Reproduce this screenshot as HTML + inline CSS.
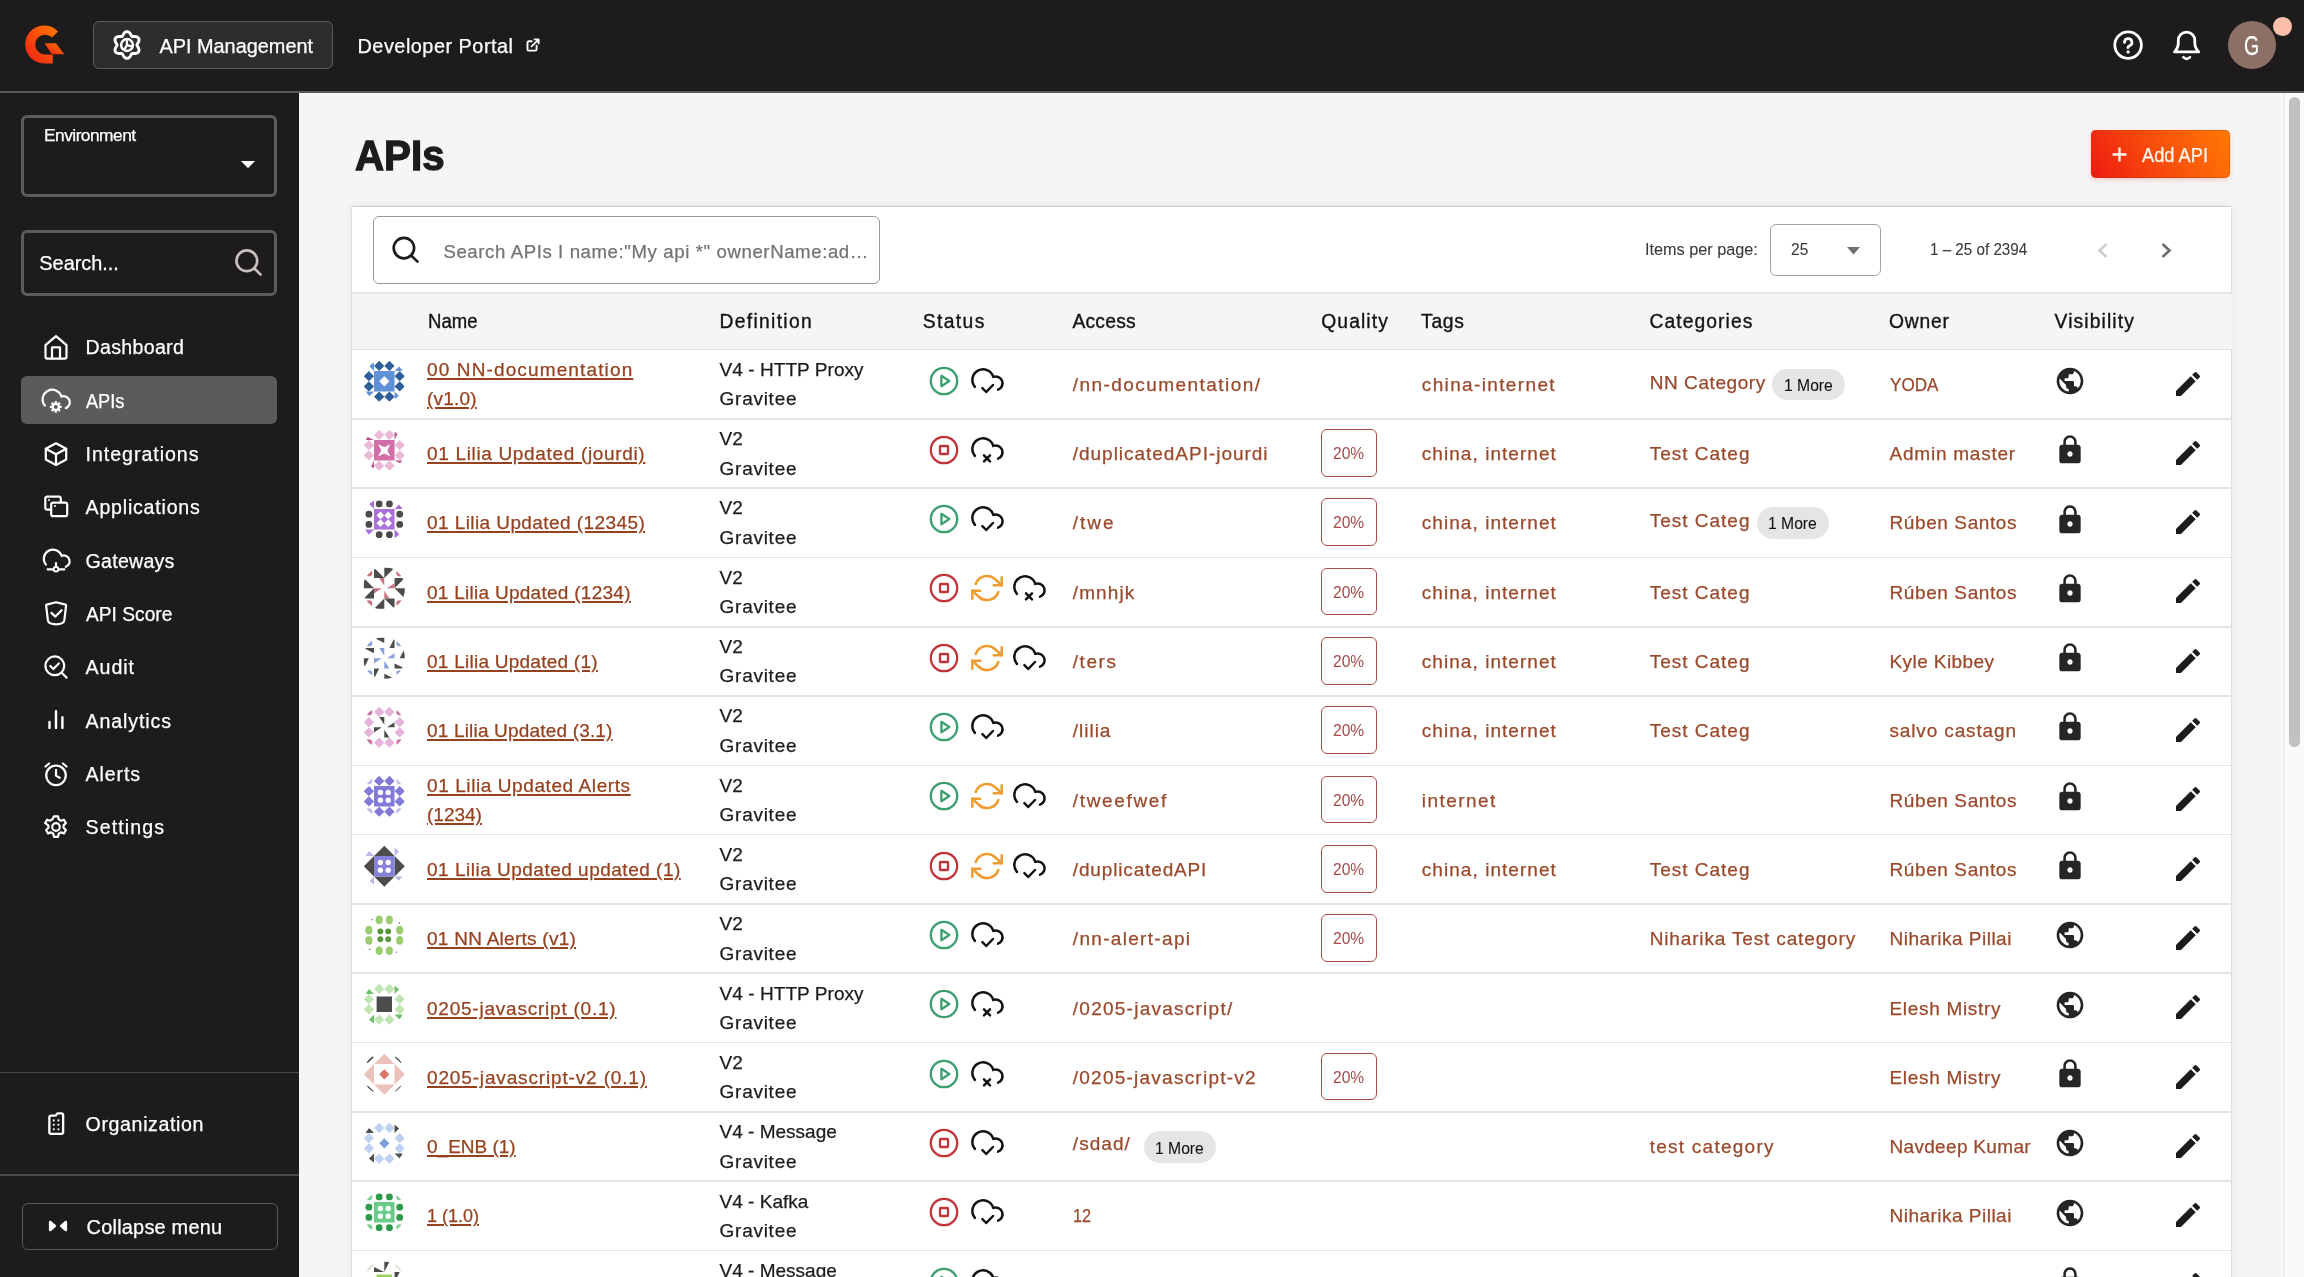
<!DOCTYPE html>
<html><head><meta charset="utf-8"><title>APIs</title>
<style>
html,body{margin:0;padding:0;}
body{width:2304px;height:1277px;overflow:hidden;position:relative;background:#f5f5f7;font-family:"Liberation Sans", sans-serif;}
.a{position:absolute;box-sizing:border-box;}
svg.a{overflow:visible;}
.t{position:absolute;line-height:0;white-space:pre;font-family:"Liberation Sans", sans-serif;-webkit-text-stroke:0.25px currentColor;}
.u{text-decoration:underline;text-decoration-thickness:1.6px;text-underline-offset:2.2px;}
</style></head><body><div class="a" style="left:0;top:0;width:2304px;height:1277px;overflow:hidden;will-change:transform">
<div class="a" style="left:0.00px;top:0.00px;width:2304.00px;height:91.00px;background:#1d1b1c;"></div>
<div class="a" style="left:0.00px;top:91.00px;width:2304.00px;height:2.00px;background:#5b595a;"></div>
<div class="a" style="left:0.00px;top:93.00px;width:298.50px;height:1184.00px;background:#1d1b1c;"></div>
<div class="a" style="left:2284.00px;top:93.00px;width:20.00px;height:1184.00px;background:#fafafa;border-left:1px solid #e9e9e9;"></div>
<div class="a" style="left:2289.00px;top:97.00px;width:11.00px;height:650.00px;background:#c1c1c1;border-radius:6px;"></div>
<svg class="a" style="left:0.00px;top:0.00px;" width="80" height="80" viewBox="0 0 80 80"><defs><linearGradient id="lg" x1="1" y1="0" x2="0" y2="1"><stop offset="0" stop-color="#ff7a00"/><stop offset="1" stop-color="#f01e14"/></linearGradient></defs><path fill="url(#lg)" d="M58 31.4 A19 19 0 1 0 45.1 63.4 L52.8 63.4 L52.8 54.7 L45.1 54.5 A9.9 9.9 0 1 1 52.1 37.6 Z"/><path fill="url(#lg)" d="M44.6 43.2 L55.9 43.2 L64.3 54.2 L51.7 54.2 Z"/></svg>
<div class="a" style="left:93.30px;top:21.30px;width:239.70px;height:47.50px;background:#2e2c2d;border:1.6px solid #5a5859;border-radius:6px;"></div>
<svg class="a" style="left:110.80px;top:29.30px;" width="32" height="32" viewBox="0 0 32 32"><g fill="none" stroke="#fff" stroke-width="2.9" stroke-linejoin="round" stroke-linecap="round"><path d="M16.00 2.60L16.47 2.64L16.93 2.75L17.37 2.94L17.80 3.20L18.20 3.51L18.58 3.88L18.92 4.28L19.24 4.71L19.52 5.16L19.78 5.61L20.02 6.05L20.24 6.47L20.46 6.85L20.69 7.18L20.95 7.43L21.30 7.52L21.69 7.56L22.13 7.56L22.61 7.54L23.11 7.53L23.63 7.53L24.16 7.55L24.69 7.61L25.21 7.71L25.71 7.85L26.19 8.04L26.62 8.28L27.01 8.57L27.34 8.92L27.60 9.30L27.80 9.72L27.93 10.18L27.99 10.66L27.99 11.16L27.92 11.66L27.79 12.17L27.61 12.67L27.39 13.16L27.15 13.63L26.89 14.08L26.63 14.51L26.38 14.91L26.16 15.29L25.99 15.65L25.90 16.00L25.99 16.35L26.16 16.71L26.38 17.09L26.63 17.49L26.89 17.92L27.15 18.37L27.39 18.84L27.61 19.33L27.79 19.83L27.92 20.34L27.99 20.84L27.99 21.34L27.93 21.82L27.80 22.28L27.60 22.70L27.34 23.08L27.01 23.43L26.62 23.72L26.19 23.96L25.71 24.15L25.21 24.29L24.69 24.39L24.16 24.45L23.63 24.47L23.11 24.47L22.61 24.46L22.13 24.44L21.69 24.44L21.30 24.48L20.95 24.57L20.69 24.82L20.46 25.15L20.24 25.53L20.02 25.95L19.78 26.39L19.52 26.84L19.24 27.29L18.92 27.72L18.58 28.12L18.20 28.49L17.80 28.80L17.37 29.06L16.93 29.25L16.47 29.36L16.00 29.40L15.53 29.36L15.07 29.25L14.63 29.06L14.20 28.80L13.80 28.49L13.42 28.12L13.08 27.72L12.76 27.29L12.48 26.84L12.22 26.39L11.98 25.95L11.76 25.53L11.54 25.15L11.31 24.82L11.05 24.57L10.70 24.48L10.31 24.44L9.87 24.44L9.39 24.46L8.89 24.47L8.37 24.47L7.84 24.45L7.31 24.39L6.79 24.29L6.29 24.15L5.81 23.96L5.38 23.72L4.99 23.43L4.66 23.08L4.40 22.70L4.20 22.28L4.07 21.82L4.01 21.34L4.01 20.84L4.08 20.34L4.21 19.83L4.39 19.33L4.61 18.84L4.85 18.37L5.11 17.92L5.37 17.49L5.62 17.09L5.84 16.71L6.01 16.35L6.10 16.00L6.01 15.65L5.84 15.29L5.62 14.91L5.37 14.51L5.11 14.08L4.85 13.63L4.61 13.16L4.39 12.67L4.21 12.17L4.08 11.66L4.01 11.16L4.01 10.66L4.07 10.18L4.20 9.72L4.40 9.30L4.66 8.92L4.99 8.57L5.38 8.28L5.81 8.04L6.29 7.85L6.79 7.71L7.31 7.61L7.84 7.55L8.37 7.53L8.89 7.53L9.39 7.54L9.87 7.56L10.31 7.56L10.70 7.52L11.05 7.43L11.31 7.18L11.54 6.85L11.76 6.47L11.98 6.05L12.22 5.61L12.48 5.16L12.76 4.71L13.08 4.28L13.42 3.88L13.80 3.51L14.20 3.20L14.63 2.94L15.07 2.75L15.53 2.64Z"/><circle cx="16" cy="16" r="5.9" stroke-width="2.5"/><path stroke-width="2.3" d="M15.9 16.2V10.6M15.9 16.2 20.6 17.3M15.9 16.2 13.5 20.4"/></g></svg>
<div class="t" style="left:159.40px;top:46.00px;font-size:19.9px;color:#fff;">API Management</div>
<div class="t" style="left:357.50px;top:46.00px;font-size:19.9px;color:#fff;letter-spacing:0.49px;">Developer Portal</div>
<svg class="a" style="left:525.00px;top:38.30px;" width="15" height="15" viewBox="0 0 15 15"><g fill="none" stroke="#fff" stroke-width="1.9" stroke-linecap="round" stroke-linejoin="round"><path d="M6.7 3.3H3.8A1.3 1.3 0 0 0 2.5 4.6V11.3A1.3 1.3 0 0 0 3.8 12.6H10.3A1.3 1.3 0 0 0 11.6 11.3V7.6"/><path d="M9.6 1.4H13.6V5.4M13.4 1.6 6.6 8.4"/></g></svg>
<svg class="a" style="left:2112.00px;top:29.00px;" width="32" height="32" viewBox="0 0 32 32"><circle cx="16.1" cy="16.1" r="13.3" fill="none" stroke="#fff" stroke-width="2.8"/><path d="M12.5 13.4A3.7 3.7 0 1 1 17.6 16.8Q15.9 17.6 15.9 18.7" fill="none" stroke="#fff" stroke-width="2.7" stroke-linecap="round"/><circle cx="16.1" cy="22.9" r="1.7" fill="#fff"/></svg>
<svg class="a" style="left:2172.00px;top:28.00px;" width="30" height="34" viewBox="0 0 30 34"><path d="M2.5 23.9H26.7C24.3 21.4 22.8 18.8 22.8 15V12.3A8.25 8.25 0 0 0 6.3 12.3V15C6.3 18.8 4.9 21.4 2.5 23.9Z" fill="none" stroke="#fff" stroke-width="2.8" stroke-linejoin="round"/><path d="M11.3 29.2Q14.6 32.6 18 29.2" fill="none" stroke="#fff" stroke-width="2.6" stroke-linecap="round"/></svg>
<div class="a" style="left:2228.10px;top:21.00px;width:48.00px;height:48.00px;background:#8c6f65;border-radius:50%;"></div>
<div class="t" style="left:2244.20px;top:45.77px;font-size:27.5px;color:#fff;transform:scaleX(0.7106);transform-origin:0 0;">G</div>
<div class="a" style="left:2273.20px;top:16.90px;width:18.80px;height:18.80px;background:#fcbfa9;border-radius:50%;"></div>
<div class="a" style="left:21.30px;top:114.70px;width:256.00px;height:82.40px;border:3.4px solid #5d5b5c;border-radius:6px;"></div>
<div class="t" style="left:44.00px;top:134.97px;font-size:17.4px;color:#fff;letter-spacing:-0.55px;">Environment</div>
<svg class="a" style="left:241.00px;top:160.50px;" width="14" height="8" viewBox="0 0 14 8"><path d="M0 0H14L7 7.2Z" fill="#fff"/></svg>
<div class="a" style="left:21.30px;top:229.50px;width:256.00px;height:66.00px;border:3.4px solid #5d5b5c;border-radius:6px;"></div>
<div class="t" style="left:39.30px;top:262.90px;font-size:19.9px;color:#fff;">Search...</div>
<svg class="a" style="left:230.00px;top:244.00px;" width="34" height="34" viewBox="0 0 34 34"><circle cx="16.8" cy="16.8" r="10.4" fill="none" stroke="#c7bfbc" stroke-width="2.7"/><path d="M24.2 24.2 30.6 30.6" stroke="#c7bfbc" stroke-width="2.7" stroke-linecap="round"/></svg>
<div class="a" style="left:21.30px;top:376.00px;width:256.00px;height:47.80px;background:#5c5a5b;border-radius:6px;"></div>
<svg class="a" style="left:44.00px;top:335.00px;" width="24" height="24" viewBox="0 0 24 24"><path fill="none" stroke="#fff" stroke-width="2.2" stroke-linecap="round" stroke-linejoin="round" d="M1.5 10.2 12 1.2l10.5 9V21.8a1.8 1.8 0 0 1-1.8 1.8H3.3a1.8 1.8 0 0 1-1.8-1.8Z"/><path fill="none" stroke="#fff" stroke-width="2.2" stroke-linecap="round" stroke-linejoin="round" d="M8 23.4V12.3h8v11.1"/></svg>
<div class="t" style="left:85.60px;top:347.31px;font-size:19.6px;color:#fff;letter-spacing:0.293px;">Dashboard</div>
<svg class="a" style="left:44.00px;top:388.33px;" width="24" height="24" viewBox="0 0 24 24"><g transform="translate(-0.2 0.9)"><path fill="none" stroke="#fff" stroke-width="2.2" stroke-linecap="round" stroke-linejoin="round" d="M1.1 16.7A9.63 9.63 0 1 1 17.67 7.68A6.12 6.12 0 0 1 22 19.2"/><g transform="translate(12 18)"><circle r="3.2" fill="none" stroke="#fff" stroke-width="2.5"/><path d="M0.00 -4.00L0.00 -5.90M2.83 -2.83L4.17 -4.17M4.00 -0.00L5.90 -0.00M2.83 2.83L4.17 4.17M0.00 4.00L0.00 5.90M-2.83 2.83L-4.17 4.17M-4.00 0.00L-5.90 0.00M-2.83 -2.83L-4.17 -4.17" stroke="#fff" stroke-width="2.2"/></g></g></svg>
<div class="t" style="left:85.60px;top:400.64px;font-size:19.6px;color:#fff;transform:scaleX(0.9277);transform-origin:0 0;">APIs</div>
<svg class="a" style="left:44.00px;top:441.66px;" width="24" height="24" viewBox="0 0 24 24"><path fill="none" stroke="#fff" stroke-width="2.2" stroke-linecap="round" stroke-linejoin="round" d="M12 1.3 22.2 6.8V17.5L12 23 1.8 17.5V6.8Z"/><path fill="none" stroke="#fff" stroke-width="2.2" stroke-linecap="round" stroke-linejoin="round" d="M1.8 6.8 12 12.3 22.2 6.8M12 12.3V23"/></svg>
<div class="t" style="left:85.60px;top:453.97px;font-size:19.6px;color:#fff;letter-spacing:0.955px;">Integrations</div>
<svg class="a" style="left:44.00px;top:494.99px;" width="24" height="24" viewBox="0 0 24 24"><rect fill="none" stroke="#fff" stroke-width="2.2" stroke-linecap="round" stroke-linejoin="round" x="1.3" y="1.6" width="15.5" height="13" rx="2"/><rect x="7.2" y="7.6" width="16" height="13.6" rx="2" fill="#1d1b1c" stroke="#fff" stroke-width="2.2"/><circle cx="5" cy="5" r="1" fill="#fff"/><circle cx="11" cy="11" r="1" fill="#fff"/></svg>
<div class="t" style="left:85.60px;top:507.30px;font-size:19.6px;color:#fff;letter-spacing:0.777px;">Applications</div>
<svg class="a" style="left:44.00px;top:548.32px;" width="24" height="24" viewBox="0 0 24 24"><path fill="none" stroke="#fff" stroke-width="2.2" stroke-linecap="round" stroke-linejoin="round" d="M1.9 16.6A9.18 9.18 0 1 1 17.7 7.85A5.83 5.83 0 0 1 21.8 18.8"/><path fill="none" stroke="#fff" stroke-width="2.2" stroke-linecap="round" stroke-linejoin="round" d="M3.6 21.3H20.4M12 15.2V19"/><circle cx="12" cy="21.3" r="2.3" fill="#1d1b1c" stroke="#fff" stroke-width="2"/></svg>
<div class="t" style="left:85.60px;top:560.63px;font-size:19.6px;color:#fff;letter-spacing:0.239px;">Gateways</div>
<svg class="a" style="left:44.00px;top:601.65px;" width="24" height="24" viewBox="0 0 24 24"><path fill="none" stroke="#fff" stroke-width="2.2" stroke-linecap="round" stroke-linejoin="round" d="M12.1 0.3 2.7 2.6Q2 2.8 2.1 3.6L3.9 18.4Q4.5 22.3 12.1 22.3 19.7 22.3 20.3 18.4L22.1 3.6Q22.2 2.8 21.5 2.6Z"/><path fill="none" stroke="#fff" stroke-width="2.2" stroke-linecap="round" stroke-linejoin="round" d="M7.4 10.9 11.4 14.6 17.6 8.2"/></svg>
<div class="t" style="left:85.60px;top:613.96px;font-size:19.6px;color:#fff;transform:scaleX(0.9794);transform-origin:0 0;">API Score</div>
<svg class="a" style="left:44.00px;top:654.98px;" width="24" height="24" viewBox="0 0 24 24"><circle fill="none" stroke="#fff" stroke-width="2.2" stroke-linecap="round" stroke-linejoin="round" cx="10.8" cy="10.8" r="9.4"/><path fill="none" stroke="#fff" stroke-width="2.2" stroke-linecap="round" stroke-linejoin="round" d="M6.3 11l3 3 5.5-5.6M18 18l4.6 4.6"/></svg>
<div class="t" style="left:85.60px;top:667.29px;font-size:19.6px;color:#fff;letter-spacing:0.932px;">Audit</div>
<svg class="a" style="left:44.00px;top:708.31px;" width="24" height="24" viewBox="0 0 24 24"><path fill="none" stroke="#fff" stroke-width="2.4" stroke-linecap="round" d="M5.5 19.9V13.9M12 19.9V3.2M18.4 19.9V9.3"/></svg>
<div class="t" style="left:85.60px;top:720.62px;font-size:19.6px;color:#fff;letter-spacing:0.874px;">Analytics</div>
<svg class="a" style="left:44.00px;top:761.64px;" width="24" height="24" viewBox="0 0 24 24"><circle fill="none" stroke="#fff" stroke-width="2.2" stroke-linecap="round" stroke-linejoin="round" cx="12" cy="13.3" r="9.8"/><path fill="none" stroke="#fff" stroke-width="2.2" stroke-linecap="round" stroke-linejoin="round" d="M12 7.8v5.8l3.6 2.2M1.5 4.5l3.6-3M22.5 4.5l-3.6-3"/></svg>
<div class="t" style="left:85.60px;top:773.95px;font-size:19.6px;color:#fff;letter-spacing:0.861px;">Alerts</div>
<svg class="a" style="left:44.00px;top:814.97px;" width="24" height="24" viewBox="0 0 24 24"><path fill="none" stroke="#fff" stroke-width="2.2" stroke-linecap="round" stroke-linejoin="round" d="M10 1.3h4l.7 3.1 2.2 1.3 3-1 2 3.4-2.3 2.2v2.5l2.3 2.2-2 3.4-3-1-2.2 1.3-.7 3.1h-4l-.7-3.1-2.2-1.3-3 1-2-3.4 2.3-2.2v-2.5L1.1 8.1l2-3.4 3 1 2.2-1.3Z"/><circle fill="none" stroke="#fff" stroke-width="2.2" stroke-linecap="round" stroke-linejoin="round" cx="12" cy="12" r="3.8"/></svg>
<div class="t" style="left:85.60px;top:827.28px;font-size:19.6px;color:#fff;letter-spacing:1.084px;">Settings</div>
<div class="a" style="left:0.00px;top:1071.50px;width:298.50px;height:1.60px;background:#4a4849;"></div>
<svg class="a" style="left:47.80px;top:1112.00px;" width="18" height="24" viewBox="0 0 18 24"><path fill="none" stroke="#fff" stroke-width="2.3" stroke-linejoin="round" d="M1.35 5.2A1.6 1.6 0 0 1 2.95 3.55H7.3Q8.3 3.55 8.5 2.6Q8.8 1.35 10 1.35H13.5A1.6 1.6 0 0 1 15.15 2.95V20.35A1.6 1.6 0 0 1 13.55 21.95H2.95A1.6 1.6 0 0 1 1.35 20.35Z"/><g fill="#fff"><circle cx="5.8" cy="8.4" r="1.05"/><circle cx="10.4" cy="8.4" r="1.05"/><circle cx="5.8" cy="12.7" r="1.05"/><circle cx="10.4" cy="12.7" r="1.05"/><circle cx="5.8" cy="17.3" r="1.05"/><circle cx="10.4" cy="17.3" r="1.05"/></g></svg>
<div class="t" style="left:85.60px;top:1123.91px;font-size:19.6px;color:#fff;letter-spacing:0.617px;">Organization</div>
<div class="a" style="left:0.00px;top:1174.00px;width:298.50px;height:1.60px;background:#4a4849;"></div>
<div class="a" style="left:21.50px;top:1203.00px;width:256.00px;height:47.00px;border:1.6px solid #5a5859;border-radius:6px;"></div>
<svg class="a" style="left:47.50px;top:1219.40px;" width="20" height="15" viewBox="0 0 20 15"><path d="M2.2 3.1 6.8 7 2.2 10.9Z M17.8 3.1 13.2 7 17.8 10.9Z" fill="#fff" stroke="#fff" stroke-width="2.6" stroke-linejoin="round"/></svg>
<div class="t" style="left:86.60px;top:1226.90px;font-size:19.9px;color:#fff;letter-spacing:0.234px;">Collapse menu</div>
<div class="t" style="left:354.60px;top:155.74px;font-size:42.3px;color:#1d1b1c;font-weight:700;transform:scaleX(0.9527);transform-origin:0 0;-webkit-text-stroke:1.3px #1d1b1c;">APIs</div>
<div class="a" style="left:2090.8px;top:130.4px;width:139.5px;height:48px;border-radius:4.8px;background:linear-gradient(60deg,#ee1a12 0%,#f74a0c 45%,#ff7a04 100%);box-shadow:inset 0 0 0 1px rgba(190,50,10,.30),0 2px 5px rgba(240,60,20,.22);"></div>
<svg class="a" style="left:2111.50px;top:146.60px;" width="15" height="15" viewBox="0 0 15 15"><path d="M7.5 0.5V14.5M0.5 7.5H14.5" stroke="#fff8ef" stroke-width="2.3"/></svg>
<div class="t" style="left:2142.20px;top:155.21px;font-size:19.6px;color:#fff6ec;transform:scaleX(0.9320);transform-origin:0 0;">Add API</div>
<div class="a" style="left:352px;top:206.5px;width:1879px;height:1100px;background:#fff;box-shadow:0 -0.8px 1.2px rgba(0,0,0,.16),0 1.6px 2px rgba(0,0,0,.10),0 0 9px rgba(0,0,0,.08);"></div>
<div class="a" style="left:373.30px;top:215.50px;width:506.70px;height:68.60px;border:1.8px solid #999999;border-radius:6px;"></div>
<svg class="a" style="left:388.00px;top:232.00px;" width="34" height="34" viewBox="0 0 34 34"><circle cx="15.9" cy="16.1" r="10.2" fill="none" stroke="#1d1b1c" stroke-width="2.7"/><path d="M23.3 23.6 29.5 29.6" stroke="#1d1b1c" stroke-width="2.7" stroke-linecap="round"/></svg>
<div class="t" style="left:443.40px;top:252.06px;font-size:18.6px;color:#747474;letter-spacing:0.602px;">Search APIs I name:"My api *" ownerName:ad…</div>
<div class="t" style="left:1645.30px;top:249.94px;font-size:16.9px;color:#3b3b3b;transform:scaleX(0.9619);transform-origin:0 0;-webkit-text-stroke:0.1px #3b3b3b;">Items per page:</div>
<div class="a" style="left:1769.80px;top:223.70px;width:110.80px;height:51.90px;border:1.6px solid #a3a3a3;border-radius:6px;"></div>
<div class="t" style="left:1791.30px;top:249.94px;font-size:16.9px;color:#3b3b3b;transform:scaleX(0.9204);transform-origin:0 0;-webkit-text-stroke:0.1px #3b3b3b;">25</div>
<svg class="a" style="left:1847.00px;top:246.50px;" width="13" height="8" viewBox="0 0 13 8"><path d="M0 0H13L6.5 7.5Z" fill="#707070"/></svg>
<div class="t" style="left:1929.90px;top:249.94px;font-size:16.9px;color:#3b3b3b;transform:scaleX(0.8999);transform-origin:0 0;-webkit-text-stroke:0.1px #3b3b3b;">1 – 25 of 2394</div>
<svg class="a" style="left:2096.00px;top:242.00px;" width="14" height="17" viewBox="0 0 14 17"><path d="M10.5 2 3.5 8.5 10.5 15" fill="none" stroke="#cfcfcf" stroke-width="2.6"/></svg>
<svg class="a" style="left:2159.00px;top:242.00px;" width="14" height="17" viewBox="0 0 14 17"><path d="M3.5 2 10.5 8.5 3.5 15" fill="none" stroke="#6b6b6b" stroke-width="2.6"/></svg>
<div class="a" style="left:352.00px;top:292.30px;width:1879.50px;height:1.60px;background:#e4e4e4;"></div>
<div class="a" style="left:352.00px;top:293.90px;width:1879.50px;height:55.20px;background:#f5f5f7;"></div>
<div class="a" style="left:352.00px;top:348.70px;width:1879.50px;height:1.60px;background:#e0e0e0;"></div>
<div class="t" style="left:427.80px;top:321.81px;font-size:19.3px;color:#141414;transform:scaleX(0.9623);transform-origin:0 0;-webkit-text-stroke:0.35px #141414;">Name</div>
<div class="t" style="left:719.60px;top:321.81px;font-size:19.3px;color:#141414;letter-spacing:1.301px;-webkit-text-stroke:0.35px #141414;">Definition</div>
<div class="t" style="left:922.70px;top:321.81px;font-size:19.3px;color:#141414;letter-spacing:1.406px;-webkit-text-stroke:0.35px #141414;">Status</div>
<div class="t" style="left:1072.40px;top:321.81px;font-size:19.3px;color:#141414;letter-spacing:0.229px;-webkit-text-stroke:0.35px #141414;">Access</div>
<div class="t" style="left:1321.20px;top:321.81px;font-size:19.3px;color:#141414;letter-spacing:1.114px;-webkit-text-stroke:0.35px #141414;">Quality</div>
<div class="t" style="left:1421.00px;top:321.81px;font-size:19.3px;color:#141414;letter-spacing:0.755px;-webkit-text-stroke:0.35px #141414;">Tags</div>
<div class="t" style="left:1649.50px;top:321.81px;font-size:19.3px;color:#141414;letter-spacing:1.072px;-webkit-text-stroke:0.35px #141414;">Categories</div>
<div class="t" style="left:1889.10px;top:321.81px;font-size:19.3px;color:#141414;letter-spacing:0.776px;-webkit-text-stroke:0.35px #141414;">Owner</div>
<div class="t" style="left:2054.50px;top:321.81px;font-size:19.3px;color:#141414;letter-spacing:1.123px;-webkit-text-stroke:0.35px #141414;">Visibility</div>
<div class="a" style="left:352.00px;top:418.01px;width:1879.50px;height:1.60px;background:#e3e3e3;"></div>
<div class="a" style="left:362.70px;top:359.50px;width:42.6px;height:42.6px;border-radius:50%;overflow:hidden;"><svg width="42.6" height="42.6" viewBox="-0.3 -0.3 16.6 16.6" style="display:block"><path fill="#2f5f98" d="M6 0L8 2L6 4L4 2ZM12 2L10 4L8 2L10 0ZM10 16L8 14L10 12L12 14ZM4 14L6 12L8 14L6 16ZM2 4L4 6L2 8L0 6ZM16 6L14 8L12 6L14 4ZM14 12L12 10L14 8L16 10ZM0 10L2 8L4 10L2 12Z"/><path fill="#5e91d6" d="M0 0L4 0L4 4ZM16 0L16 4L12 4ZM16 16L12 16L12 12ZM0 16L0 12L4 12Z"/><path fill="#5e91d6" d="M4 4L8 4L8 6L4 6ZM4 6L6 6L6 8L4 8ZM8 6L6 8L6 6ZM12 4L12 8L10 8L10 4ZM10 4L10 6L8 6L8 4ZM10 8L8 6L10 6ZM12 12L8 12L8 10L12 10ZM12 10L10 10L10 8L12 8ZM8 10L10 8L10 10ZM4 12L4 8L6 8L6 12ZM6 12L6 10L8 10L8 12ZM6 8L8 10L6 10Z"/></svg></div>
<div class="t u" style="left:427.00px;top:369.82px;font-size:19px;color:#96421f;letter-spacing:1.132px;">00 NN-documentation</div>
<div class="t u" style="left:427.00px;top:399.22px;font-size:19px;color:#96421f;letter-spacing:0.204px;">(v1.0)</div>
<div class="t" style="left:719.60px;top:369.82px;font-size:19px;color:#1d1b1c;letter-spacing:0.055px;">V4 - HTTP Proxy</div>
<div class="t" style="left:719.60px;top:399.22px;font-size:19px;color:#1d1b1c;letter-spacing:0.727px;">Gravitee</div>
<svg class="a" style="left:928.00px;top:364.50px;" width="32" height="32" viewBox="0 0 32 32"><g fill="none" stroke="#3c9f6f" stroke-width="2.3" stroke-linejoin="round"><circle cx="16" cy="16" r="13.2"/><path d="M13.4 10.8 21.3 16 13.4 21.2Z"/></g></svg>
<svg class="a" style="left:970.65px;top:364.50px;" width="32" height="32" viewBox="0 0 32 32"><g fill="none" stroke="#111" stroke-width="2.5" stroke-linecap="round" stroke-linejoin="round"><path d="M3.9 21.9A10.7 10.7 0 1 1 22.3 11.9A6.8 6.8 0 0 1 27.1 24.7"/><path d="M11.4 23.1 15.2 27 22 20"/></g></svg>
<div class="t" style="left:1072.80px;top:384.72px;font-size:19px;color:#9a492b;letter-spacing:1.443px;">/nn-documentation/</div>
<div class="t" style="left:1421.80px;top:384.72px;font-size:19px;color:#9a492b;letter-spacing:1.36px;">china-internet</div>
<div class="t" style="left:1649.70px;top:382.52px;font-size:19px;color:#9a492b;letter-spacing:0.567px;">NN Category</div>
<div class="a" style="left:1772.40px;top:368.80px;width:72.60px;height:31.30px;background:#e5e5e5;border-radius:16px;"></div>
<div class="t" style="left:1783.80px;top:384.72px;font-size:16.4px;color:#141414;transform:scaleX(0.9566);transform-origin:0 0;-webkit-text-stroke:0.1px #141414;">1 More</div>
<div class="t" style="left:1889.50px;top:384.72px;font-size:19px;color:#9a492b;transform:scaleX(0.8986);transform-origin:0 0;">YODA</div>
<svg class="a" style="left:2054.10px;top:364.90px;" width="32" height="32" viewBox="0 0 24 24"><path fill="#262425" d="M12 2C6.48 2 2 6.48 2 12s4.48 10 10 10 10-4.48 10-10S17.52 2 12 2zm-1 17.93c-3.95-.49-7-3.850-7-7.93 0-.62.08-1.21.21-1.790L9 15v1c0 1.1.9 2 2 2v1.93zm6.9-2.54c-.26-.81-1-1.39-1.9-1.39h-1v-3c0-.55-.45-1-1-1H8v-2h2c.55 0 1-.45 1-1V7h2c1.1 0 2-.9 2-2v-.41c2.93 1.19 5 4.06 5 7.41 0 2.08-.8 3.97-2.1 5.39z"/></svg>
<svg class="a" style="left:2171.80px;top:367.50px;" width="32" height="32" viewBox="0 0 24 24"><path fill="#1d1b1c" d="M3 17.25V21h3.75L17.81 9.94l-3.75-3.75L3 17.25zM20.71 7.04c.39-.39.39-1.02 0-1.41l-2.34-2.34c-.39-.39-1.02-.39-1.41 0l-1.83 1.83 3.75 3.75 1.83-1.83z"/></svg>
<div class="a" style="left:352.00px;top:487.32px;width:1879.50px;height:1.60px;background:#e3e3e3;"></div>
<div class="a" style="left:362.70px;top:428.81px;width:42.6px;height:42.6px;border-radius:50%;overflow:hidden;"><svg width="42.6" height="42.6" viewBox="-0.3 -0.3 16.6 16.6" style="display:block"><path fill="#e9b9d7" d="M6 0L8 2L6 4L4 2ZM12 2L10 4L8 2L10 0ZM10 16L8 14L10 12L12 14ZM4 14L6 12L8 14L6 16ZM2 4L4 6L2 8L0 6ZM16 6L14 8L12 6L14 4ZM14 12L12 10L14 8L16 10ZM0 10L2 8L4 10L2 12Z"/><path fill="#b8558c" d="M4 4L0 4L0 2ZM12 4L12 0L14 0ZM12 12L16 12L16 14ZM4 12L4 16L2 16Z"/><path fill="#d26ea7" d="M4 4L8 4L8 6.8L5.6 5.6L6.8 8L4 8ZM12 4L12 8L9.2 8L10.4 5.6L8 6.8L8 4ZM12 12L8 12L8 9.2L10.4 10.4L9.2 8L12 8ZM4 12L4 8L6.8 8L5.6 10.4L8 9.2L8 12Z"/></svg></div>
<div class="t u" style="left:427.00px;top:454.03px;font-size:19px;color:#96421f;letter-spacing:0.665px;">01 Lilia Updated (jourdi)</div>
<div class="t" style="left:719.60px;top:439.13px;font-size:19px;color:#1d1b1c;">V2</div>
<div class="t" style="left:719.60px;top:468.53px;font-size:19px;color:#1d1b1c;letter-spacing:0.727px;">Gravitee</div>
<svg class="a" style="left:928.00px;top:433.81px;" width="32" height="32" viewBox="0 0 32 32"><g fill="none" stroke="#c3343a" stroke-width="2.3" stroke-linejoin="round"><circle cx="16" cy="16" r="13.2"/><rect x="12" y="12" width="8" height="8" rx="0.6"/></g></svg>
<svg class="a" style="left:970.65px;top:433.81px;" width="32" height="32" viewBox="0 0 32 32"><g fill="none" stroke="#111" stroke-width="2.5" stroke-linecap="round"><path d="M3.9 21.9A10.7 10.7 0 1 1 22.3 11.9A6.8 6.8 0 0 1 27.1 24.7"/><path d="M13 21.3 19 27.3M19 21.3 13 27.3"/></g></svg>
<div class="t" style="left:1072.80px;top:454.03px;font-size:19px;color:#9a492b;letter-spacing:0.969px;">/duplicatedAPI-jourdi</div>
<div class="a" style="left:1321.20px;top:429.01px;width:56.10px;height:47.70px;border:1.7px solid #a84a4c;border-radius:6px;"></div>
<div class="t" style="left:1333.30px;top:453.10px;font-size:16.2px;color:#a8484a;transform:scaleX(0.9628);transform-origin:0 0;-webkit-text-stroke:0;">20%</div>
<div class="t" style="left:1421.80px;top:454.03px;font-size:19px;color:#9a492b;letter-spacing:1.053px;">china, internet</div>
<div class="t" style="left:1649.70px;top:454.03px;font-size:19px;color:#9a492b;letter-spacing:0.997px;">Test Categ</div>
<div class="t" style="left:1889.50px;top:454.03px;font-size:19px;color:#9a492b;letter-spacing:0.772px;">Admin master</div>
<svg class="a" style="left:2054.10px;top:434.21px;" width="32" height="32" viewBox="0 0 24 24"><path fill="#262425" d="M18 8h-1V6c0-2.76-2.24-5-5-5S7 3.24 7 6v2H6c-1.1 0-2 .9-2 2v10c0 1.1.9 2 2 2h12c1.1 0 2-.9 2-2V10c0-1.1-.9-2-2-2zm-6 9c-1.1 0-2-.9-2-2s.9-2 2-2 2 .9 2 2-.9 2-2 2zm3.1-9H8.9V6c0-1.710 1.390-3.1 3.1-3.1 1.71 0 3.1 1.39 3.1 3.1v2z"/></svg>
<svg class="a" style="left:2171.80px;top:436.81px;" width="32" height="32" viewBox="0 0 24 24"><path fill="#1d1b1c" d="M3 17.25V21h3.75L17.81 9.94l-3.75-3.75L3 17.25zM20.71 7.04c.39-.39.39-1.02 0-1.41l-2.34-2.34c-.39-.39-1.02-.39-1.41 0l-1.83 1.83 3.75 3.75 1.83-1.83z"/></svg>
<div class="a" style="left:352.00px;top:556.63px;width:1879.50px;height:1.60px;background:#e3e3e3;"></div>
<div class="a" style="left:362.70px;top:498.12px;width:42.6px;height:42.6px;border-radius:50%;overflow:hidden;"><svg width="42.6" height="42.6" viewBox="-0.3 -0.3 16.6 16.6" style="display:block"><path fill="#4c4c4c" d="M4.667 2a1.333,1.333 0 1,1 2.667,0a1.333,1.333 0 1,1 -2.667,0M8.667 2a1.333,1.333 0 1,1 2.667,0a1.333,1.333 0 1,1 -2.667,0M8.667 14a1.333,1.333 0 1,1 2.667,0a1.333,1.333 0 1,1 -2.667,0M4.667 14a1.333,1.333 0 1,1 2.667,0a1.333,1.333 0 1,1 -2.667,0M0.667 6a1.333,1.333 0 1,1 2.667,0a1.333,1.333 0 1,1 -2.667,0M12.667 6a1.333,1.333 0 1,1 2.667,0a1.333,1.333 0 1,1 -2.667,0M12.667 10a1.333,1.333 0 1,1 2.667,0a1.333,1.333 0 1,1 -2.667,0M0.667 10a1.333,1.333 0 1,1 2.667,0a1.333,1.333 0 1,1 -2.667,0"/><path fill="#a970d8" d="M0 0L4 0L4 4ZM16 0L16 4L12 4ZM16 16L12 16L12 12ZM0 16L0 12L4 12Z"/><path fill="#a970d8" d="M4 4L8 4L8 8L4 8ZM5 6.5L6.5 8L8 6.5L6.5 5ZM12 4L12 8L8 8L8 4ZM9.5 5L8 6.5L9.5 8L11 6.5ZM12 12L8 12L8 8L12 8ZM11 9.5L9.5 8L8 9.5L9.5 11ZM4 12L4 8L8 8L8 12ZM6.5 11L8 9.5L6.5 8L5 9.5Z"/></svg></div>
<div class="t u" style="left:427.00px;top:523.34px;font-size:19px;color:#96421f;letter-spacing:0.418px;">01 Lilia Updated (12345)</div>
<div class="t" style="left:719.60px;top:508.44px;font-size:19px;color:#1d1b1c;">V2</div>
<div class="t" style="left:719.60px;top:537.84px;font-size:19px;color:#1d1b1c;letter-spacing:0.727px;">Gravitee</div>
<svg class="a" style="left:928.00px;top:503.12px;" width="32" height="32" viewBox="0 0 32 32"><g fill="none" stroke="#3c9f6f" stroke-width="2.3" stroke-linejoin="round"><circle cx="16" cy="16" r="13.2"/><path d="M13.4 10.8 21.3 16 13.4 21.2Z"/></g></svg>
<svg class="a" style="left:970.65px;top:503.12px;" width="32" height="32" viewBox="0 0 32 32"><g fill="none" stroke="#111" stroke-width="2.5" stroke-linecap="round" stroke-linejoin="round"><path d="M3.9 21.9A10.7 10.7 0 1 1 22.3 11.9A6.8 6.8 0 0 1 27.1 24.7"/><path d="M11.4 23.1 15.2 27 22 20"/></g></svg>
<div class="t" style="left:1072.80px;top:523.34px;font-size:19px;color:#9a492b;letter-spacing:1.947px;">/twe</div>
<div class="a" style="left:1321.20px;top:498.32px;width:56.10px;height:47.70px;border:1.7px solid #a84a4c;border-radius:6px;"></div>
<div class="t" style="left:1333.30px;top:522.41px;font-size:16.2px;color:#a8484a;transform:scaleX(0.9628);transform-origin:0 0;-webkit-text-stroke:0;">20%</div>
<div class="t" style="left:1421.80px;top:523.34px;font-size:19px;color:#9a492b;letter-spacing:1.053px;">china, internet</div>
<div class="t" style="left:1649.70px;top:521.14px;font-size:19px;color:#9a492b;letter-spacing:0.997px;">Test Categ</div>
<div class="a" style="left:1756.70px;top:507.42px;width:72.60px;height:31.30px;background:#e5e5e5;border-radius:16px;"></div>
<div class="t" style="left:1768.10px;top:523.34px;font-size:16.4px;color:#141414;transform:scaleX(0.9566);transform-origin:0 0;-webkit-text-stroke:0.1px #141414;">1 More</div>
<div class="t" style="left:1889.50px;top:523.34px;font-size:19px;color:#9a492b;letter-spacing:0.598px;">Rúben Santos</div>
<svg class="a" style="left:2054.10px;top:503.52px;" width="32" height="32" viewBox="0 0 24 24"><path fill="#262425" d="M18 8h-1V6c0-2.76-2.24-5-5-5S7 3.24 7 6v2H6c-1.1 0-2 .9-2 2v10c0 1.1.9 2 2 2h12c1.1 0 2-.9 2-2V10c0-1.1-.9-2-2-2zm-6 9c-1.1 0-2-.9-2-2s.9-2 2-2 2 .9 2 2-.9 2-2 2zm3.1-9H8.9V6c0-1.710 1.390-3.1 3.1-3.1 1.71 0 3.1 1.39 3.1 3.1v2z"/></svg>
<svg class="a" style="left:2171.80px;top:506.12px;" width="32" height="32" viewBox="0 0 24 24"><path fill="#1d1b1c" d="M3 17.25V21h3.75L17.81 9.94l-3.75-3.75L3 17.25zM20.71 7.04c.39-.39.39-1.02 0-1.41l-2.34-2.34c-.39-.39-1.02-.39-1.41 0l-1.83 1.83 3.75 3.75 1.83-1.83z"/></svg>
<div class="a" style="left:352.00px;top:625.94px;width:1879.50px;height:1.60px;background:#e3e3e3;"></div>
<div class="a" style="left:362.70px;top:567.43px;width:42.6px;height:42.6px;border-radius:50%;overflow:hidden;"><svg width="42.6" height="42.6" viewBox="-0.3 -0.3 16.6 16.6" style="display:block"><path fill="#4c4c4c" d="M8 4L4 4L4 0ZM8 4L8 0L12 0ZM8 12L12 12L12 16ZM8 12L8 16L4 16ZM4 8L0 8L0 4ZM12 8L12 4L16 4ZM12 8L16 8L16 12ZM4 8L4 12L0 12Z"/><path fill="#c9717f" d="M0.667 2a1.333,1.333 0 1,1 2.667,0a1.333,1.333 0 1,1 -2.667,0M12.667 2a1.333,1.333 0 1,1 2.667,0a1.333,1.333 0 1,1 -2.667,0M12.667 14a1.333,1.333 0 1,1 2.667,0a1.333,1.333 0 1,1 -2.667,0M0.667 14a1.333,1.333 0 1,1 2.667,0a1.333,1.333 0 1,1 -2.667,0"/><path fill="#c9717f" d="M8 4L8 7L6 4ZM12 8L9 8L12 6ZM8 12L8 9L10 12ZM4 8L7 8L4 10Z"/></svg></div>
<div class="t u" style="left:427.00px;top:592.65px;font-size:19px;color:#96421f;letter-spacing:0.271px;">01 Lilia Updated (1234)</div>
<div class="t" style="left:719.60px;top:577.75px;font-size:19px;color:#1d1b1c;">V2</div>
<div class="t" style="left:719.60px;top:607.15px;font-size:19px;color:#1d1b1c;letter-spacing:0.727px;">Gravitee</div>
<svg class="a" style="left:928.00px;top:572.43px;" width="32" height="32" viewBox="0 0 32 32"><g fill="none" stroke="#c3343a" stroke-width="2.3" stroke-linejoin="round"><circle cx="16" cy="16" r="13.2"/><rect x="12" y="12" width="8" height="8" rx="0.6"/></g></svg>
<svg class="a" style="left:970.65px;top:572.43px;" width="32" height="32" viewBox="0 0 32 32"><g fill="none" stroke="#ef9c33" stroke-width="2.5" stroke-linecap="round" stroke-linejoin="round"><path d="M30.7 5.3V13.3H22.7M1.3 26.7V18.7H9.3"/><path d="M4.7 12A12 12 0 0 1 24.5 7.5L30.7 13.3M1.3 18.7 7.5 24.5A12 12 0 0 0 27.3 20"/></g></svg>
<svg class="a" style="left:1013.30px;top:572.43px;" width="32" height="32" viewBox="0 0 32 32"><g fill="none" stroke="#111" stroke-width="2.5" stroke-linecap="round"><path d="M3.9 21.9A10.7 10.7 0 1 1 22.3 11.9A6.8 6.8 0 0 1 27.1 24.7"/><path d="M13 21.3 19 27.3M19 21.3 13 27.3"/></g></svg>
<div class="t" style="left:1072.80px;top:592.65px;font-size:19px;color:#9a492b;letter-spacing:1.086px;">/mnhjk</div>
<div class="a" style="left:1321.20px;top:567.63px;width:56.10px;height:47.70px;border:1.7px solid #a84a4c;border-radius:6px;"></div>
<div class="t" style="left:1333.30px;top:591.72px;font-size:16.2px;color:#a8484a;transform:scaleX(0.9628);transform-origin:0 0;-webkit-text-stroke:0;">20%</div>
<div class="t" style="left:1421.80px;top:592.65px;font-size:19px;color:#9a492b;letter-spacing:1.053px;">china, internet</div>
<div class="t" style="left:1649.70px;top:592.65px;font-size:19px;color:#9a492b;letter-spacing:0.997px;">Test Categ</div>
<div class="t" style="left:1889.50px;top:592.65px;font-size:19px;color:#9a492b;letter-spacing:0.598px;">Rúben Santos</div>
<svg class="a" style="left:2054.10px;top:572.83px;" width="32" height="32" viewBox="0 0 24 24"><path fill="#262425" d="M18 8h-1V6c0-2.76-2.24-5-5-5S7 3.24 7 6v2H6c-1.1 0-2 .9-2 2v10c0 1.1.9 2 2 2h12c1.1 0 2-.9 2-2V10c0-1.1-.9-2-2-2zm-6 9c-1.1 0-2-.9-2-2s.9-2 2-2 2 .9 2 2-.9 2-2 2zm3.1-9H8.9V6c0-1.710 1.390-3.1 3.1-3.1 1.71 0 3.1 1.39 3.1 3.1v2z"/></svg>
<svg class="a" style="left:2171.80px;top:575.43px;" width="32" height="32" viewBox="0 0 24 24"><path fill="#1d1b1c" d="M3 17.25V21h3.75L17.81 9.94l-3.75-3.75L3 17.25zM20.71 7.04c.39-.39.39-1.02 0-1.41l-2.34-2.34c-.39-.39-1.02-.39-1.41 0l-1.83 1.83 3.75 3.75 1.83-1.83z"/></svg>
<div class="a" style="left:352.00px;top:695.25px;width:1879.50px;height:1.60px;background:#e3e3e3;"></div>
<div class="a" style="left:362.70px;top:636.74px;width:42.6px;height:42.6px;border-radius:50%;overflow:hidden;"><svg width="42.6" height="42.6" viewBox="-0.3 -0.3 16.6 16.6" style="display:block"><path fill="#4c4c4c" d="M4 0L8 0L8 2ZM12 0L12 4L10 4ZM12 16L8 16L8 14ZM4 16L4 12L6 12ZM0 4L4 4L4 6ZM16 4L16 8L14 8ZM16 12L12 12L12 10ZM0 12L0 8L2 8Z"/><path fill="#8a9fdc" d="M0.667 2a1.333,1.333 0 1,1 2.667,0a1.333,1.333 0 1,1 -2.667,0M12.667 2a1.333,1.333 0 1,1 2.667,0a1.333,1.333 0 1,1 -2.667,0M12.667 14a1.333,1.333 0 1,1 2.667,0a1.333,1.333 0 1,1 -2.667,0M0.667 14a1.333,1.333 0 1,1 2.667,0a1.333,1.333 0 1,1 -2.667,0"/><path fill="#8a9fdc" d="M8 4L8 7L6 4ZM12 8L9 8L12 6ZM8 12L8 9L10 12ZM4 8L7 8L4 10Z"/></svg></div>
<div class="t u" style="left:427.00px;top:661.96px;font-size:19px;color:#96421f;letter-spacing:0.251px;">01 Lilia Updated (1)</div>
<div class="t" style="left:719.60px;top:647.06px;font-size:19px;color:#1d1b1c;">V2</div>
<div class="t" style="left:719.60px;top:676.46px;font-size:19px;color:#1d1b1c;letter-spacing:0.727px;">Gravitee</div>
<svg class="a" style="left:928.00px;top:641.74px;" width="32" height="32" viewBox="0 0 32 32"><g fill="none" stroke="#c3343a" stroke-width="2.3" stroke-linejoin="round"><circle cx="16" cy="16" r="13.2"/><rect x="12" y="12" width="8" height="8" rx="0.6"/></g></svg>
<svg class="a" style="left:970.65px;top:641.74px;" width="32" height="32" viewBox="0 0 32 32"><g fill="none" stroke="#ef9c33" stroke-width="2.5" stroke-linecap="round" stroke-linejoin="round"><path d="M30.7 5.3V13.3H22.7M1.3 26.7V18.7H9.3"/><path d="M4.7 12A12 12 0 0 1 24.5 7.5L30.7 13.3M1.3 18.7 7.5 24.5A12 12 0 0 0 27.3 20"/></g></svg>
<svg class="a" style="left:1013.30px;top:641.74px;" width="32" height="32" viewBox="0 0 32 32"><g fill="none" stroke="#111" stroke-width="2.5" stroke-linecap="round" stroke-linejoin="round"><path d="M3.9 21.9A10.7 10.7 0 1 1 22.3 11.9A6.8 6.8 0 0 1 27.1 24.7"/><path d="M11.4 23.1 15.2 27 22 20"/></g></svg>
<div class="t" style="left:1072.80px;top:661.96px;font-size:19px;color:#9a492b;letter-spacing:1.537px;">/ters</div>
<div class="a" style="left:1321.20px;top:636.94px;width:56.10px;height:47.70px;border:1.7px solid #a84a4c;border-radius:6px;"></div>
<div class="t" style="left:1333.30px;top:661.03px;font-size:16.2px;color:#a8484a;transform:scaleX(0.9628);transform-origin:0 0;-webkit-text-stroke:0;">20%</div>
<div class="t" style="left:1421.80px;top:661.96px;font-size:19px;color:#9a492b;letter-spacing:1.053px;">china, internet</div>
<div class="t" style="left:1649.70px;top:661.96px;font-size:19px;color:#9a492b;letter-spacing:0.997px;">Test Categ</div>
<div class="t" style="left:1889.50px;top:661.96px;font-size:19px;color:#9a492b;letter-spacing:0.426px;">Kyle Kibbey</div>
<svg class="a" style="left:2054.10px;top:642.14px;" width="32" height="32" viewBox="0 0 24 24"><path fill="#262425" d="M18 8h-1V6c0-2.76-2.24-5-5-5S7 3.24 7 6v2H6c-1.1 0-2 .9-2 2v10c0 1.1.9 2 2 2h12c1.1 0 2-.9 2-2V10c0-1.1-.9-2-2-2zm-6 9c-1.1 0-2-.9-2-2s.9-2 2-2 2 .9 2 2-.9 2-2 2zm3.1-9H8.9V6c0-1.710 1.390-3.1 3.1-3.1 1.71 0 3.1 1.39 3.1 3.1v2z"/></svg>
<svg class="a" style="left:2171.80px;top:644.74px;" width="32" height="32" viewBox="0 0 24 24"><path fill="#1d1b1c" d="M3 17.25V21h3.75L17.81 9.94l-3.75-3.75L3 17.25zM20.71 7.04c.39-.39.39-1.02 0-1.41l-2.34-2.34c-.39-.39-1.02-.39-1.41 0l-1.83 1.83 3.75 3.75 1.83-1.83z"/></svg>
<div class="a" style="left:352.00px;top:764.56px;width:1879.50px;height:1.60px;background:#e3e3e3;"></div>
<div class="a" style="left:362.70px;top:706.05px;width:42.6px;height:42.6px;border-radius:50%;overflow:hidden;"><svg width="42.6" height="42.6" viewBox="-0.3 -0.3 16.6 16.6" style="display:block"><path fill="#e4b4dc" d="M6 0L8 2L6 4L4 2ZM12 2L10 4L8 2L10 0ZM10 16L8 14L10 12L12 14ZM4 14L6 12L8 14L6 16ZM2 4L4 6L2 8L0 6ZM16 6L14 8L12 6L14 4ZM14 12L12 10L14 8L16 10ZM0 10L2 8L4 10L2 12Z"/><path fill="#c9739f" d="M0.667 2a1.333,1.333 0 1,1 2.667,0a1.333,1.333 0 1,1 -2.667,0M12.667 2a1.333,1.333 0 1,1 2.667,0a1.333,1.333 0 1,1 -2.667,0M12.667 14a1.333,1.333 0 1,1 2.667,0a1.333,1.333 0 1,1 -2.667,0M0.667 14a1.333,1.333 0 1,1 2.667,0a1.333,1.333 0 1,1 -2.667,0"/><path fill="#4c4c4c" d="M8 4L8 7L6 4ZM12 8L9 8L12 6ZM8 12L8 9L10 12ZM4 8L7 8L4 10Z"/></svg></div>
<div class="t u" style="left:427.00px;top:731.27px;font-size:19px;color:#96421f;letter-spacing:0.178px;">01 Lilia Updated (3.1)</div>
<div class="t" style="left:719.60px;top:716.37px;font-size:19px;color:#1d1b1c;">V2</div>
<div class="t" style="left:719.60px;top:745.77px;font-size:19px;color:#1d1b1c;letter-spacing:0.727px;">Gravitee</div>
<svg class="a" style="left:928.00px;top:711.05px;" width="32" height="32" viewBox="0 0 32 32"><g fill="none" stroke="#3c9f6f" stroke-width="2.3" stroke-linejoin="round"><circle cx="16" cy="16" r="13.2"/><path d="M13.4 10.8 21.3 16 13.4 21.2Z"/></g></svg>
<svg class="a" style="left:970.65px;top:711.05px;" width="32" height="32" viewBox="0 0 32 32"><g fill="none" stroke="#111" stroke-width="2.5" stroke-linecap="round" stroke-linejoin="round"><path d="M3.9 21.9A10.7 10.7 0 1 1 22.3 11.9A6.8 6.8 0 0 1 27.1 24.7"/><path d="M11.4 23.1 15.2 27 22 20"/></g></svg>
<div class="t" style="left:1072.80px;top:731.27px;font-size:19px;color:#9a492b;letter-spacing:0.973px;">/lilia</div>
<div class="a" style="left:1321.20px;top:706.25px;width:56.10px;height:47.70px;border:1.7px solid #a84a4c;border-radius:6px;"></div>
<div class="t" style="left:1333.30px;top:730.34px;font-size:16.2px;color:#a8484a;transform:scaleX(0.9628);transform-origin:0 0;-webkit-text-stroke:0;">20%</div>
<div class="t" style="left:1421.80px;top:731.27px;font-size:19px;color:#9a492b;letter-spacing:1.053px;">china, internet</div>
<div class="t" style="left:1649.70px;top:731.27px;font-size:19px;color:#9a492b;letter-spacing:0.997px;">Test Categ</div>
<div class="t" style="left:1889.50px;top:731.27px;font-size:19px;color:#9a492b;letter-spacing:0.859px;">salvo castagn</div>
<svg class="a" style="left:2054.10px;top:711.45px;" width="32" height="32" viewBox="0 0 24 24"><path fill="#262425" d="M18 8h-1V6c0-2.76-2.24-5-5-5S7 3.24 7 6v2H6c-1.1 0-2 .9-2 2v10c0 1.1.9 2 2 2h12c1.1 0 2-.9 2-2V10c0-1.1-.9-2-2-2zm-6 9c-1.1 0-2-.9-2-2s.9-2 2-2 2 .9 2 2-.9 2-2 2zm3.1-9H8.9V6c0-1.710 1.390-3.1 3.1-3.1 1.71 0 3.1 1.39 3.1 3.1v2z"/></svg>
<svg class="a" style="left:2171.80px;top:714.05px;" width="32" height="32" viewBox="0 0 24 24"><path fill="#1d1b1c" d="M3 17.25V21h3.75L17.81 9.94l-3.75-3.75L3 17.25zM20.71 7.04c.39-.39.39-1.02 0-1.41l-2.34-2.34c-.39-.39-1.02-.39-1.41 0l-1.83 1.83 3.75 3.75 1.83-1.83z"/></svg>
<div class="a" style="left:352.00px;top:833.87px;width:1879.50px;height:1.60px;background:#e3e3e3;"></div>
<div class="a" style="left:362.70px;top:775.36px;width:42.6px;height:42.6px;border-radius:50%;overflow:hidden;"><svg width="42.6" height="42.6" viewBox="-0.3 -0.3 16.6 16.6" style="display:block"><path fill="#7f7bd6" d="M6 0L8 2L6 4L4 2ZM12 2L10 4L8 2L10 0ZM10 16L8 14L10 12L12 14ZM4 14L6 12L8 14L6 16ZM2 4L4 6L2 8L0 6ZM16 6L14 8L12 6L14 4ZM14 12L12 10L14 8L16 10ZM0 10L2 8L4 10L2 12Z"/><path fill="#bebce9" d="M0.667 2a1.333,1.333 0 1,1 2.667,0a1.333,1.333 0 1,1 -2.667,0M12.667 2a1.333,1.333 0 1,1 2.667,0a1.333,1.333 0 1,1 -2.667,0M12.667 14a1.333,1.333 0 1,1 2.667,0a1.333,1.333 0 1,1 -2.667,0M0.667 14a1.333,1.333 0 1,1 2.667,0a1.333,1.333 0 1,1 -2.667,0"/><path fill="#7f7bd6" d="M4 4L8 4L8 8L4 8ZM5.44 6.48a1.04,1.04 0 1,0 2.08,0a1.04,1.04 0 1,0 -2.08,0M12 4L12 8L8 8L8 4ZM8.48 6.48a1.04,1.04 0 1,0 2.08,0a1.04,1.04 0 1,0 -2.08,0M12 12L8 12L8 8L12 8ZM8.48 9.52a1.04,1.04 0 1,0 2.08,0a1.04,1.04 0 1,0 -2.08,0M4 12L4 8L8 8L8 12ZM5.44 9.52a1.04,1.04 0 1,0 2.08,0a1.04,1.04 0 1,0 -2.08,0"/></svg></div>
<div class="t u" style="left:427.00px;top:785.68px;font-size:19px;color:#96421f;letter-spacing:0.59px;">01 Lilia Updated Alerts</div>
<div class="t u" style="left:427.00px;top:815.08px;font-size:19px;color:#96421f;letter-spacing:-0.004px;">(1234)</div>
<div class="t" style="left:719.60px;top:785.68px;font-size:19px;color:#1d1b1c;">V2</div>
<div class="t" style="left:719.60px;top:815.08px;font-size:19px;color:#1d1b1c;letter-spacing:0.727px;">Gravitee</div>
<svg class="a" style="left:928.00px;top:780.36px;" width="32" height="32" viewBox="0 0 32 32"><g fill="none" stroke="#3c9f6f" stroke-width="2.3" stroke-linejoin="round"><circle cx="16" cy="16" r="13.2"/><path d="M13.4 10.8 21.3 16 13.4 21.2Z"/></g></svg>
<svg class="a" style="left:970.65px;top:780.36px;" width="32" height="32" viewBox="0 0 32 32"><g fill="none" stroke="#ef9c33" stroke-width="2.5" stroke-linecap="round" stroke-linejoin="round"><path d="M30.7 5.3V13.3H22.7M1.3 26.7V18.7H9.3"/><path d="M4.7 12A12 12 0 0 1 24.5 7.5L30.7 13.3M1.3 18.7 7.5 24.5A12 12 0 0 0 27.3 20"/></g></svg>
<svg class="a" style="left:1013.30px;top:780.36px;" width="32" height="32" viewBox="0 0 32 32"><g fill="none" stroke="#111" stroke-width="2.5" stroke-linecap="round" stroke-linejoin="round"><path d="M3.9 21.9A10.7 10.7 0 1 1 22.3 11.9A6.8 6.8 0 0 1 27.1 24.7"/><path d="M11.4 23.1 15.2 27 22 20"/></g></svg>
<div class="t" style="left:1072.80px;top:800.58px;font-size:19px;color:#9a492b;letter-spacing:1.654px;">/tweefwef</div>
<div class="a" style="left:1321.20px;top:775.56px;width:56.10px;height:47.70px;border:1.7px solid #a84a4c;border-radius:6px;"></div>
<div class="t" style="left:1333.30px;top:799.65px;font-size:16.2px;color:#a8484a;transform:scaleX(0.9628);transform-origin:0 0;-webkit-text-stroke:0;">20%</div>
<div class="t" style="left:1421.80px;top:800.58px;font-size:19px;color:#9a492b;letter-spacing:1.461px;">internet</div>
<div class="t" style="left:1889.50px;top:800.58px;font-size:19px;color:#9a492b;letter-spacing:0.598px;">Rúben Santos</div>
<svg class="a" style="left:2054.10px;top:780.76px;" width="32" height="32" viewBox="0 0 24 24"><path fill="#262425" d="M18 8h-1V6c0-2.76-2.24-5-5-5S7 3.24 7 6v2H6c-1.1 0-2 .9-2 2v10c0 1.1.9 2 2 2h12c1.1 0 2-.9 2-2V10c0-1.1-.9-2-2-2zm-6 9c-1.1 0-2-.9-2-2s.9-2 2-2 2 .9 2 2-.9 2-2 2zm3.1-9H8.9V6c0-1.710 1.390-3.1 3.1-3.1 1.71 0 3.1 1.39 3.1 3.1v2z"/></svg>
<svg class="a" style="left:2171.80px;top:783.36px;" width="32" height="32" viewBox="0 0 24 24"><path fill="#1d1b1c" d="M3 17.25V21h3.75L17.81 9.94l-3.75-3.75L3 17.25zM20.71 7.04c.39-.39.39-1.02 0-1.41l-2.34-2.34c-.39-.39-1.02-.39-1.41 0l-1.83 1.83 3.75 3.75 1.83-1.83z"/></svg>
<div class="a" style="left:352.00px;top:903.18px;width:1879.50px;height:1.60px;background:#e3e3e3;"></div>
<div class="a" style="left:362.70px;top:844.67px;width:42.6px;height:42.6px;border-radius:50%;overflow:hidden;"><svg width="42.6" height="42.6" viewBox="-0.3 -0.3 16.6 16.6" style="display:block"><path fill="#4c4c4c" d="M8 0L8 4L4 4ZM12 4L8 4L8 0ZM8 16L8 12L12 12ZM4 12L8 12L8 16ZM4 4L4 8L0 8ZM16 8L12 8L12 4ZM12 12L12 8L16 8ZM0 8L4 8L4 12Z"/><path fill="#bab8e9" d="M4 4L0 4L0 0ZM12 4L12 0L16 0ZM12 12L16 12L16 16ZM4 12L4 16L0 16Z"/><path fill="#8782d9" d="M4 4L8 4L8 8L4 8ZM5.44 6.48a1.04,1.04 0 1,0 2.08,0a1.04,1.04 0 1,0 -2.08,0M12 4L12 8L8 8L8 4ZM8.48 6.48a1.04,1.04 0 1,0 2.08,0a1.04,1.04 0 1,0 -2.08,0M12 12L8 12L8 8L12 8ZM8.48 9.52a1.04,1.04 0 1,0 2.08,0a1.04,1.04 0 1,0 -2.08,0M4 12L4 8L8 8L8 12ZM5.44 9.52a1.04,1.04 0 1,0 2.08,0a1.04,1.04 0 1,0 -2.08,0"/></svg></div>
<div class="t u" style="left:427.00px;top:869.89px;font-size:19px;color:#96421f;letter-spacing:0.5px;">01 Lilia Updated updated (1)</div>
<div class="t" style="left:719.60px;top:854.99px;font-size:19px;color:#1d1b1c;">V2</div>
<div class="t" style="left:719.60px;top:884.39px;font-size:19px;color:#1d1b1c;letter-spacing:0.727px;">Gravitee</div>
<svg class="a" style="left:928.00px;top:849.67px;" width="32" height="32" viewBox="0 0 32 32"><g fill="none" stroke="#c3343a" stroke-width="2.3" stroke-linejoin="round"><circle cx="16" cy="16" r="13.2"/><rect x="12" y="12" width="8" height="8" rx="0.6"/></g></svg>
<svg class="a" style="left:970.65px;top:849.67px;" width="32" height="32" viewBox="0 0 32 32"><g fill="none" stroke="#ef9c33" stroke-width="2.5" stroke-linecap="round" stroke-linejoin="round"><path d="M30.7 5.3V13.3H22.7M1.3 26.7V18.7H9.3"/><path d="M4.7 12A12 12 0 0 1 24.5 7.5L30.7 13.3M1.3 18.7 7.5 24.5A12 12 0 0 0 27.3 20"/></g></svg>
<svg class="a" style="left:1013.30px;top:849.67px;" width="32" height="32" viewBox="0 0 32 32"><g fill="none" stroke="#111" stroke-width="2.5" stroke-linecap="round" stroke-linejoin="round"><path d="M3.9 21.9A10.7 10.7 0 1 1 22.3 11.9A6.8 6.8 0 0 1 27.1 24.7"/><path d="M11.4 23.1 15.2 27 22 20"/></g></svg>
<div class="t" style="left:1072.80px;top:869.89px;font-size:19px;color:#9a492b;letter-spacing:0.851px;">/duplicatedAPI</div>
<div class="a" style="left:1321.20px;top:844.87px;width:56.10px;height:47.70px;border:1.7px solid #a84a4c;border-radius:6px;"></div>
<div class="t" style="left:1333.30px;top:868.96px;font-size:16.2px;color:#a8484a;transform:scaleX(0.9628);transform-origin:0 0;-webkit-text-stroke:0;">20%</div>
<div class="t" style="left:1421.80px;top:869.89px;font-size:19px;color:#9a492b;letter-spacing:1.053px;">china, internet</div>
<div class="t" style="left:1649.70px;top:869.89px;font-size:19px;color:#9a492b;letter-spacing:0.997px;">Test Categ</div>
<div class="t" style="left:1889.50px;top:869.89px;font-size:19px;color:#9a492b;letter-spacing:0.598px;">Rúben Santos</div>
<svg class="a" style="left:2054.10px;top:850.07px;" width="32" height="32" viewBox="0 0 24 24"><path fill="#262425" d="M18 8h-1V6c0-2.76-2.24-5-5-5S7 3.24 7 6v2H6c-1.1 0-2 .9-2 2v10c0 1.1.9 2 2 2h12c1.1 0 2-.9 2-2V10c0-1.1-.9-2-2-2zm-6 9c-1.1 0-2-.9-2-2s.9-2 2-2 2 .9 2 2-.9 2-2 2zm3.1-9H8.9V6c0-1.710 1.390-3.1 3.1-3.1 1.71 0 3.1 1.39 3.1 3.1v2z"/></svg>
<svg class="a" style="left:2171.80px;top:852.67px;" width="32" height="32" viewBox="0 0 24 24"><path fill="#1d1b1c" d="M3 17.25V21h3.75L17.81 9.94l-3.75-3.75L3 17.25zM20.71 7.04c.39-.39.39-1.02 0-1.41l-2.34-2.34c-.39-.39-1.02-.39-1.41 0l-1.83 1.83 3.75 3.75 1.83-1.83z"/></svg>
<div class="a" style="left:352.00px;top:972.49px;width:1879.50px;height:1.60px;background:#e3e3e3;"></div>
<div class="a" style="left:362.70px;top:913.98px;width:42.6px;height:42.6px;border-radius:50%;overflow:hidden;"><svg width="42.6" height="42.6" viewBox="-0.3 -0.3 16.6 16.6" style="display:block"><ellipse cx="6" cy="2" rx="1.28" ry="1.58" fill="#9acd6c" stroke="#8cbc62" stroke-width="0.15"/><ellipse cx="10" cy="2" rx="1.28" ry="1.58" fill="#9acd6c" stroke="#8cbc62" stroke-width="0.15"/><ellipse cx="6" cy="14" rx="1.28" ry="1.58" fill="#9acd6c" stroke="#8cbc62" stroke-width="0.15"/><ellipse cx="10" cy="14" rx="1.28" ry="1.58" fill="#9acd6c" stroke="#8cbc62" stroke-width="0.15"/><ellipse cx="2" cy="6" rx="1.28" ry="1.58" fill="#9acd6c" stroke="#8cbc62" stroke-width="0.15"/><ellipse cx="2" cy="10" rx="1.28" ry="1.58" fill="#9acd6c" stroke="#8cbc62" stroke-width="0.15"/><ellipse cx="14" cy="6" rx="1.28" ry="1.58" fill="#9acd6c" stroke="#8cbc62" stroke-width="0.15"/><ellipse cx="14" cy="10" rx="1.28" ry="1.58" fill="#9acd6c" stroke="#8cbc62" stroke-width="0.15"/><circle cx="6.48" cy="6.48" r="1.05" fill="#5a9a3a" stroke="#4d8a32" stroke-width="0.2"/><circle cx="6.48" cy="9.52" r="1.05" fill="#5a9a3a" stroke="#4d8a32" stroke-width="0.2"/><circle cx="9.52" cy="6.48" r="1.05" fill="#5a9a3a" stroke="#4d8a32" stroke-width="0.2"/><circle cx="9.52" cy="9.52" r="1.05" fill="#5a9a3a" stroke="#4d8a32" stroke-width="0.2"/><circle cx="3.2" cy="1.9" r="0.25" fill="#444"/><circle cx="13.9" cy="3.2" r="0.25" fill="#444"/><circle cx="2.3" cy="13.5" r="0.25" fill="#444"/><circle cx="12.7" cy="14.6" r="0.25" fill="#444"/></svg></div>
<div class="t u" style="left:427.00px;top:939.20px;font-size:19px;color:#96421f;letter-spacing:0.259px;">01 NN Alerts (v1)</div>
<div class="t" style="left:719.60px;top:924.30px;font-size:19px;color:#1d1b1c;">V2</div>
<div class="t" style="left:719.60px;top:953.70px;font-size:19px;color:#1d1b1c;letter-spacing:0.727px;">Gravitee</div>
<svg class="a" style="left:928.00px;top:918.98px;" width="32" height="32" viewBox="0 0 32 32"><g fill="none" stroke="#3c9f6f" stroke-width="2.3" stroke-linejoin="round"><circle cx="16" cy="16" r="13.2"/><path d="M13.4 10.8 21.3 16 13.4 21.2Z"/></g></svg>
<svg class="a" style="left:970.65px;top:918.98px;" width="32" height="32" viewBox="0 0 32 32"><g fill="none" stroke="#111" stroke-width="2.5" stroke-linecap="round" stroke-linejoin="round"><path d="M3.9 21.9A10.7 10.7 0 1 1 22.3 11.9A6.8 6.8 0 0 1 27.1 24.7"/><path d="M11.4 23.1 15.2 27 22 20"/></g></svg>
<div class="t" style="left:1072.80px;top:939.20px;font-size:19px;color:#9a492b;letter-spacing:1.317px;">/nn-alert-api</div>
<div class="a" style="left:1321.20px;top:914.18px;width:56.10px;height:47.70px;border:1.7px solid #a84a4c;border-radius:6px;"></div>
<div class="t" style="left:1333.30px;top:938.27px;font-size:16.2px;color:#a8484a;transform:scaleX(0.9628);transform-origin:0 0;-webkit-text-stroke:0;">20%</div>
<div class="t" style="left:1649.70px;top:939.20px;font-size:19px;color:#9a492b;letter-spacing:0.851px;">Niharika Test category</div>
<div class="t" style="left:1889.50px;top:939.20px;font-size:19px;color:#9a492b;letter-spacing:0.485px;">Niharika Pillai</div>
<svg class="a" style="left:2054.10px;top:919.38px;" width="32" height="32" viewBox="0 0 24 24"><path fill="#262425" d="M12 2C6.48 2 2 6.48 2 12s4.48 10 10 10 10-4.48 10-10S17.52 2 12 2zm-1 17.93c-3.95-.49-7-3.850-7-7.93 0-.62.08-1.21.21-1.790L9 15v1c0 1.1.9 2 2 2v1.93zm6.9-2.54c-.26-.81-1-1.39-1.9-1.39h-1v-3c0-.55-.45-1-1-1H8v-2h2c.55 0 1-.45 1-1V7h2c1.1 0 2-.9 2-2v-.41c2.93 1.19 5 4.06 5 7.41 0 2.08-.8 3.97-2.1 5.39z"/></svg>
<svg class="a" style="left:2171.80px;top:921.98px;" width="32" height="32" viewBox="0 0 24 24"><path fill="#1d1b1c" d="M3 17.25V21h3.75L17.81 9.94l-3.75-3.75L3 17.25zM20.71 7.04c.39-.39.39-1.02 0-1.41l-2.34-2.34c-.39-.39-1.02-.39-1.41 0l-1.83 1.83 3.75 3.75 1.83-1.83z"/></svg>
<div class="a" style="left:352.00px;top:1041.80px;width:1879.50px;height:1.60px;background:#e3e3e3;"></div>
<div class="a" style="left:362.70px;top:983.29px;width:42.6px;height:42.6px;border-radius:50%;overflow:hidden;"><svg width="42.6" height="42.6" viewBox="-0.3 -0.3 16.6 16.6" style="display:block"><path fill="#c0e4b4" d="M6 0L8 2L6 4L4 2ZM12 2L10 4L8 2L10 0ZM10 16L8 14L10 12L12 14ZM4 14L6 12L8 14L6 16ZM2 4L4 6L2 8L0 6ZM16 6L14 8L12 6L14 4ZM14 12L12 10L14 8L16 10ZM0 10L2 8L4 10L2 12Z"/><path fill="#6cbf6c" d="M4 4L0 4L0 0ZM12 4L12 0L16 0ZM12 12L16 12L16 16ZM4 12L4 16L0 16Z"/><path fill="#4c4c4c" d="M5 5L8 5L8 8L5 8ZM11 5L11 8L8 8L8 5ZM11 11L8 11L8 8L11 8ZM5 11L5 8L8 8L8 11Z"/></svg></div>
<div class="t u" style="left:427.00px;top:1008.51px;font-size:19px;color:#96421f;letter-spacing:0.775px;">0205-javascript (0.1)</div>
<div class="t" style="left:719.60px;top:993.61px;font-size:19px;color:#1d1b1c;letter-spacing:0.055px;">V4 - HTTP Proxy</div>
<div class="t" style="left:719.60px;top:1023.01px;font-size:19px;color:#1d1b1c;letter-spacing:0.727px;">Gravitee</div>
<svg class="a" style="left:928.00px;top:988.29px;" width="32" height="32" viewBox="0 0 32 32"><g fill="none" stroke="#3c9f6f" stroke-width="2.3" stroke-linejoin="round"><circle cx="16" cy="16" r="13.2"/><path d="M13.4 10.8 21.3 16 13.4 21.2Z"/></g></svg>
<svg class="a" style="left:970.65px;top:988.29px;" width="32" height="32" viewBox="0 0 32 32"><g fill="none" stroke="#111" stroke-width="2.5" stroke-linecap="round"><path d="M3.9 21.9A10.7 10.7 0 1 1 22.3 11.9A6.8 6.8 0 0 1 27.1 24.7"/><path d="M13 21.3 19 27.3M19 21.3 13 27.3"/></g></svg>
<div class="t" style="left:1072.80px;top:1008.51px;font-size:19px;color:#9a492b;letter-spacing:1.25px;">/0205-javascript/</div>
<div class="t" style="left:1889.50px;top:1008.51px;font-size:19px;color:#9a492b;letter-spacing:0.685px;">Elesh Mistry</div>
<svg class="a" style="left:2054.10px;top:988.69px;" width="32" height="32" viewBox="0 0 24 24"><path fill="#262425" d="M12 2C6.48 2 2 6.48 2 12s4.48 10 10 10 10-4.48 10-10S17.52 2 12 2zm-1 17.93c-3.95-.49-7-3.850-7-7.93 0-.62.08-1.21.21-1.790L9 15v1c0 1.1.9 2 2 2v1.93zm6.9-2.54c-.26-.81-1-1.39-1.9-1.39h-1v-3c0-.55-.45-1-1-1H8v-2h2c.55 0 1-.45 1-1V7h2c1.1 0 2-.9 2-2v-.41c2.93 1.19 5 4.06 5 7.41 0 2.08-.8 3.97-2.1 5.39z"/></svg>
<svg class="a" style="left:2171.80px;top:991.29px;" width="32" height="32" viewBox="0 0 24 24"><path fill="#1d1b1c" d="M3 17.25V21h3.75L17.81 9.94l-3.75-3.75L3 17.25zM20.71 7.04c.39-.39.39-1.02 0-1.41l-2.34-2.34c-.39-.39-1.02-.39-1.41 0l-1.83 1.83 3.75 3.75 1.83-1.83z"/></svg>
<div class="a" style="left:352.00px;top:1111.11px;width:1879.50px;height:1.60px;background:#e3e3e3;"></div>
<div class="a" style="left:362.70px;top:1052.60px;width:42.6px;height:42.6px;border-radius:50%;overflow:hidden;"><svg width="42.6" height="42.6" viewBox="-0.3 -0.3 16.6 16.6" style="display:block"><path fill="#ecc1bc" d="M8 0L8 4L4 4ZM12 4L8 4L8 0ZM8 16L8 12L12 12ZM4 12L8 12L8 16ZM4 4L4 8L0 8ZM16 8L12 8L12 4ZM12 12L12 8L16 8ZM0 8L4 8L4 12Z"/><path fill="#d9786b" d="M8 6L8 8L6 8ZM10 8L8 8L8 6ZM8 10L8 8L10 8ZM6 8L8 8L8 10Z"/><path d="M1.5 3.15 3.4 1.35M12.6 1.35 14.5 3.15M14.5 12.85 12.6 14.65M3.4 14.65 1.5 12.85" stroke="#4c4c4c" stroke-width="0.78" stroke-linecap="round"/></svg></div>
<div class="t u" style="left:427.00px;top:1077.82px;font-size:19px;color:#96421f;letter-spacing:0.848px;">0205-javascript-v2 (0.1)</div>
<div class="t" style="left:719.60px;top:1062.92px;font-size:19px;color:#1d1b1c;">V2</div>
<div class="t" style="left:719.60px;top:1092.32px;font-size:19px;color:#1d1b1c;letter-spacing:0.727px;">Gravitee</div>
<svg class="a" style="left:928.00px;top:1057.60px;" width="32" height="32" viewBox="0 0 32 32"><g fill="none" stroke="#3c9f6f" stroke-width="2.3" stroke-linejoin="round"><circle cx="16" cy="16" r="13.2"/><path d="M13.4 10.8 21.3 16 13.4 21.2Z"/></g></svg>
<svg class="a" style="left:970.65px;top:1057.60px;" width="32" height="32" viewBox="0 0 32 32"><g fill="none" stroke="#111" stroke-width="2.5" stroke-linecap="round"><path d="M3.9 21.9A10.7 10.7 0 1 1 22.3 11.9A6.8 6.8 0 0 1 27.1 24.7"/><path d="M13 21.3 19 27.3M19 21.3 13 27.3"/></g></svg>
<div class="t" style="left:1072.80px;top:1077.82px;font-size:19px;color:#9a492b;letter-spacing:1.237px;">/0205-javascript-v2</div>
<div class="a" style="left:1321.20px;top:1052.80px;width:56.10px;height:47.70px;border:1.7px solid #a84a4c;border-radius:6px;"></div>
<div class="t" style="left:1333.30px;top:1076.89px;font-size:16.2px;color:#a8484a;transform:scaleX(0.9628);transform-origin:0 0;-webkit-text-stroke:0;">20%</div>
<div class="t" style="left:1889.50px;top:1077.82px;font-size:19px;color:#9a492b;letter-spacing:0.685px;">Elesh Mistry</div>
<svg class="a" style="left:2054.10px;top:1058.00px;" width="32" height="32" viewBox="0 0 24 24"><path fill="#262425" d="M18 8h-1V6c0-2.76-2.24-5-5-5S7 3.24 7 6v2H6c-1.1 0-2 .9-2 2v10c0 1.1.9 2 2 2h12c1.1 0 2-.9 2-2V10c0-1.1-.9-2-2-2zm-6 9c-1.1 0-2-.9-2-2s.9-2 2-2 2 .9 2 2-.9 2-2 2zm3.1-9H8.9V6c0-1.710 1.390-3.1 3.1-3.1 1.71 0 3.1 1.39 3.1 3.1v2z"/></svg>
<svg class="a" style="left:2171.80px;top:1060.60px;" width="32" height="32" viewBox="0 0 24 24"><path fill="#1d1b1c" d="M3 17.25V21h3.75L17.81 9.94l-3.75-3.75L3 17.25zM20.71 7.04c.39-.39.39-1.02 0-1.41l-2.34-2.34c-.39-.39-1.02-.39-1.41 0l-1.83 1.83 3.75 3.75 1.83-1.83z"/></svg>
<div class="a" style="left:352.00px;top:1180.42px;width:1879.50px;height:1.60px;background:#e3e3e3;"></div>
<div class="a" style="left:362.70px;top:1121.91px;width:42.6px;height:42.6px;border-radius:50%;overflow:hidden;"><svg width="42.6" height="42.6" viewBox="-0.3 -0.3 16.6 16.6" style="display:block"><path fill="#bed1f0" d="M6 0L8 2L6 4L4 2ZM12 2L10 4L8 2L10 0ZM10 16L8 14L10 12L12 14ZM4 14L6 12L8 14L6 16ZM2 4L4 6L2 8L0 6ZM16 6L14 8L12 6L14 4ZM14 12L12 10L14 8L16 10ZM0 10L2 8L4 10L2 12Z"/><path fill="#4c4c4c" d="M4 4L0 4L0 0ZM12 4L12 0L16 0ZM12 12L16 12L16 16ZM4 12L4 16L0 16Z"/><path fill="#7ba1dc" d="M8 6L8 8L6 8ZM10 8L8 8L8 6ZM8 10L8 8L10 8ZM6 8L8 8L8 10Z"/></svg></div>
<div class="t u" style="left:427.00px;top:1147.13px;font-size:19px;color:#96421f;">0_ENB (1)</div>
<div class="t" style="left:719.60px;top:1132.23px;font-size:19px;color:#1d1b1c;">V4 - Message</div>
<div class="t" style="left:719.60px;top:1161.63px;font-size:19px;color:#1d1b1c;letter-spacing:0.727px;">Gravitee</div>
<svg class="a" style="left:928.00px;top:1126.91px;" width="32" height="32" viewBox="0 0 32 32"><g fill="none" stroke="#c3343a" stroke-width="2.3" stroke-linejoin="round"><circle cx="16" cy="16" r="13.2"/><rect x="12" y="12" width="8" height="8" rx="0.6"/></g></svg>
<svg class="a" style="left:970.65px;top:1126.91px;" width="32" height="32" viewBox="0 0 32 32"><g fill="none" stroke="#111" stroke-width="2.5" stroke-linecap="round" stroke-linejoin="round"><path d="M3.9 21.9A10.7 10.7 0 1 1 22.3 11.9A6.8 6.8 0 0 1 27.1 24.7"/><path d="M11.4 23.1 15.2 27 22 20"/></g></svg>
<div class="t" style="left:1072.80px;top:1143.93px;font-size:19px;color:#9a492b;letter-spacing:1.067px;">/sdad/</div>
<div class="a" style="left:1143.80px;top:1131.31px;width:72.10px;height:31.30px;background:#e5e5e5;border-radius:16px;"></div>
<div class="t" style="left:1154.70px;top:1148.03px;font-size:16.4px;color:#141414;transform:scaleX(0.9566);transform-origin:0 0;-webkit-text-stroke:0.1px #141414;">1 More</div>
<div class="t" style="left:1649.70px;top:1147.13px;font-size:19px;color:#9a492b;letter-spacing:1.252px;">test category</div>
<div class="t" style="left:1889.50px;top:1147.13px;font-size:19px;color:#9a492b;letter-spacing:0.317px;">Navdeep Kumar</div>
<svg class="a" style="left:2054.10px;top:1127.31px;" width="32" height="32" viewBox="0 0 24 24"><path fill="#262425" d="M12 2C6.48 2 2 6.48 2 12s4.48 10 10 10 10-4.48 10-10S17.52 2 12 2zm-1 17.93c-3.95-.49-7-3.850-7-7.93 0-.62.08-1.21.21-1.790L9 15v1c0 1.1.9 2 2 2v1.93zm6.9-2.54c-.26-.81-1-1.39-1.9-1.39h-1v-3c0-.55-.45-1-1-1H8v-2h2c.55 0 1-.45 1-1V7h2c1.1 0 2-.9 2-2v-.41c2.93 1.19 5 4.06 5 7.41 0 2.08-.8 3.97-2.1 5.39z"/></svg>
<svg class="a" style="left:2171.80px;top:1129.91px;" width="32" height="32" viewBox="0 0 24 24"><path fill="#1d1b1c" d="M3 17.25V21h3.75L17.81 9.94l-3.75-3.75L3 17.25zM20.71 7.04c.39-.39.39-1.02 0-1.41l-2.34-2.34c-.39-.39-1.02-.39-1.41 0l-1.83 1.83 3.75 3.75 1.83-1.83z"/></svg>
<div class="a" style="left:352.00px;top:1249.73px;width:1879.50px;height:1.60px;background:#e3e3e3;"></div>
<div class="a" style="left:362.70px;top:1191.22px;width:42.6px;height:42.6px;border-radius:50%;overflow:hidden;"><svg width="42.6" height="42.6" viewBox="-0.3 -0.3 16.6 16.6" style="display:block"><path fill="#2e9b4b" d="M4.667 2a1.333,1.333 0 1,1 2.667,0a1.333,1.333 0 1,1 -2.667,0M8.667 2a1.333,1.333 0 1,1 2.667,0a1.333,1.333 0 1,1 -2.667,0M8.667 14a1.333,1.333 0 1,1 2.667,0a1.333,1.333 0 1,1 -2.667,0M4.667 14a1.333,1.333 0 1,1 2.667,0a1.333,1.333 0 1,1 -2.667,0M0.667 6a1.333,1.333 0 1,1 2.667,0a1.333,1.333 0 1,1 -2.667,0M12.667 6a1.333,1.333 0 1,1 2.667,0a1.333,1.333 0 1,1 -2.667,0M12.667 10a1.333,1.333 0 1,1 2.667,0a1.333,1.333 0 1,1 -2.667,0M0.667 10a1.333,1.333 0 1,1 2.667,0a1.333,1.333 0 1,1 -2.667,0"/><path fill="#80cf96" d="M0.667 2a1.333,1.333 0 1,1 2.667,0a1.333,1.333 0 1,1 -2.667,0M12.667 2a1.333,1.333 0 1,1 2.667,0a1.333,1.333 0 1,1 -2.667,0M12.667 14a1.333,1.333 0 1,1 2.667,0a1.333,1.333 0 1,1 -2.667,0M0.667 14a1.333,1.333 0 1,1 2.667,0a1.333,1.333 0 1,1 -2.667,0"/><path fill="#6bcc89" d="M4 4L8 4L8 8L4 8ZM5.44 6.48a1.04,1.04 0 1,0 2.08,0a1.04,1.04 0 1,0 -2.08,0M12 4L12 8L8 8L8 4ZM8.48 6.48a1.04,1.04 0 1,0 2.08,0a1.04,1.04 0 1,0 -2.08,0M12 12L8 12L8 8L12 8ZM8.48 9.52a1.04,1.04 0 1,0 2.08,0a1.04,1.04 0 1,0 -2.08,0M4 12L4 8L8 8L8 12ZM5.44 9.52a1.04,1.04 0 1,0 2.08,0a1.04,1.04 0 1,0 -2.08,0"/></svg></div>
<div class="t u" style="left:427.00px;top:1216.44px;font-size:19px;color:#96421f;transform:scaleX(0.9450);transform-origin:0 0;">1 (1.0)</div>
<div class="t" style="left:719.60px;top:1201.54px;font-size:19px;color:#1d1b1c;">V4 - Kafka</div>
<div class="t" style="left:719.60px;top:1230.94px;font-size:19px;color:#1d1b1c;letter-spacing:0.727px;">Gravitee</div>
<svg class="a" style="left:928.00px;top:1196.22px;" width="32" height="32" viewBox="0 0 32 32"><g fill="none" stroke="#c3343a" stroke-width="2.3" stroke-linejoin="round"><circle cx="16" cy="16" r="13.2"/><rect x="12" y="12" width="8" height="8" rx="0.6"/></g></svg>
<svg class="a" style="left:970.65px;top:1196.22px;" width="32" height="32" viewBox="0 0 32 32"><g fill="none" stroke="#111" stroke-width="2.5" stroke-linecap="round" stroke-linejoin="round"><path d="M3.9 21.9A10.7 10.7 0 1 1 22.3 11.9A6.8 6.8 0 0 1 27.1 24.7"/><path d="M11.4 23.1 15.2 27 22 20"/></g></svg>
<div class="t" style="left:1072.80px;top:1216.44px;font-size:19px;color:#9a492b;transform:scaleX(0.8609);transform-origin:0 0;">12</div>
<div class="t" style="left:1889.50px;top:1216.44px;font-size:19px;color:#9a492b;letter-spacing:0.485px;">Niharika Pillai</div>
<svg class="a" style="left:2054.10px;top:1196.62px;" width="32" height="32" viewBox="0 0 24 24"><path fill="#262425" d="M12 2C6.48 2 2 6.48 2 12s4.48 10 10 10 10-4.48 10-10S17.52 2 12 2zm-1 17.93c-3.95-.49-7-3.850-7-7.93 0-.62.08-1.21.21-1.790L9 15v1c0 1.1.9 2 2 2v1.93zm6.9-2.54c-.26-.81-1-1.39-1.9-1.39h-1v-3c0-.55-.45-1-1-1H8v-2h2c.55 0 1-.45 1-1V7h2c1.1 0 2-.9 2-2v-.41c2.93 1.19 5 4.06 5 7.41 0 2.08-.8 3.97-2.1 5.39z"/></svg>
<svg class="a" style="left:2171.80px;top:1199.22px;" width="32" height="32" viewBox="0 0 24 24"><path fill="#1d1b1c" d="M3 17.25V21h3.75L17.81 9.94l-3.75-3.75L3 17.25zM20.71 7.04c.39-.39.39-1.02 0-1.41l-2.34-2.34c-.39-.39-1.02-.39-1.41 0l-1.83 1.83 3.75 3.75 1.83-1.83z"/></svg>
<div class="a" style="left:352.00px;top:1319.04px;width:1879.50px;height:1.60px;background:#e3e3e3;"></div>
<div class="a" style="left:362.70px;top:1260.53px;width:42.6px;height:42.6px;border-radius:50%;overflow:hidden;"><svg width="42.6" height="42.6" viewBox="-0.3 -0.3 16.6 16.6" style="display:block"><path fill="#4c4c4c" d="M8 4L4 4L4 2ZM8 4L8 0L10 0ZM8 12L12 12L12 14ZM8 12L8 16L6 16ZM4 8L0 8L0 6ZM12 8L12 4L14 4ZM12 8L16 8L16 10ZM4 8L4 12L2 12Z"/><path fill="#9bd05b" d="M5 5L8 5L8 8L5 8ZM11 5L11 8L8 8L8 5ZM11 11L8 11L8 8L11 8ZM5 11L5 8L8 8L8 11Z"/><path d="M1.5 3.15 3.4 1.35M12.6 1.35 14.5 3.15M14.5 12.85 12.6 14.65M3.4 14.65 1.5 12.85" stroke="#d6dcc4" stroke-width="0.78" stroke-linecap="round"/></svg></div>
<div class="t u" style="left:427.00px;top:1285.75px;font-size:19px;color:#96421f;">0_x (1)</div>
<div class="t" style="left:719.60px;top:1270.85px;font-size:19px;color:#1d1b1c;">V4 - Message</div>
<div class="t" style="left:719.60px;top:1300.25px;font-size:19px;color:#1d1b1c;letter-spacing:0.727px;">Gravitee</div>
<svg class="a" style="left:928.00px;top:1265.53px;" width="32" height="32" viewBox="0 0 32 32"><g fill="none" stroke="#3c9f6f" stroke-width="2.3" stroke-linejoin="round"><circle cx="16" cy="16" r="13.2"/><path d="M13.4 10.8 21.3 16 13.4 21.2Z"/></g></svg>
<svg class="a" style="left:970.65px;top:1265.53px;" width="32" height="32" viewBox="0 0 32 32"><g fill="none" stroke="#111" stroke-width="2.5" stroke-linecap="round" stroke-linejoin="round"><path d="M3.9 21.9A10.7 10.7 0 1 1 22.3 11.9A6.8 6.8 0 0 1 27.1 24.7"/><path d="M11.4 23.1 15.2 27 22 20"/></g></svg>
<svg class="a" style="left:2054.10px;top:1265.93px;" width="32" height="32" viewBox="0 0 24 24"><path fill="#262425" d="M18 8h-1V6c0-2.76-2.24-5-5-5S7 3.24 7 6v2H6c-1.1 0-2 .9-2 2v10c0 1.1.9 2 2 2h12c1.1 0 2-.9 2-2V10c0-1.1-.9-2-2-2zm-6 9c-1.1 0-2-.9-2-2s.9-2 2-2 2 .9 2 2-.9 2-2 2zm3.1-9H8.9V6c0-1.710 1.390-3.1 3.1-3.1 1.71 0 3.1 1.39 3.1 3.1v2z"/></svg>
<svg class="a" style="left:2171.80px;top:1268.53px;" width="32" height="32" viewBox="0 0 24 24"><path fill="#1d1b1c" d="M3 17.25V21h3.75L17.81 9.94l-3.75-3.75L3 17.25zM20.71 7.04c.39-.39.39-1.02 0-1.41l-2.34-2.34c-.39-.39-1.02-.39-1.41 0l-1.83 1.83 3.75 3.75 1.83-1.83z"/></svg>
</div></body></html>
